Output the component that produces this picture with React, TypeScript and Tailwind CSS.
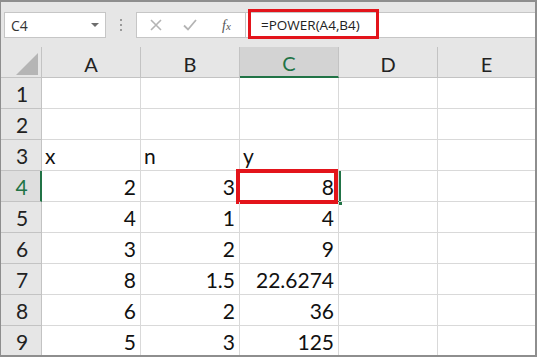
import React from "react";

const rows: { n: number; a?: string; b?: string; c?: string; left?: boolean }[] = [
  { n: 1 },
  { n: 2 },
  { n: 3, a: "x", b: "n", c: "y", left: true },
  { n: 4, a: "2", b: "3", c: "8" },
  { n: 5, a: "4", b: "1", c: "4" },
  { n: 6, a: "3", b: "2", c: "9" },
  { n: 7, a: "8", b: "1.5", c: "22.6274" },
  { n: 8, a: "6", b: "2", c: "36" },
  { n: 9, a: "5", b: "3", c: "125" },
];

const cellFont = { fontFamily: "Lato, 'Open Sans', sans-serif" };
const uiFont = { fontFamily: "'Open Sans', 'Noto Sans', sans-serif" };

function Cell({ v, left, w, extra }: { v?: string; left?: boolean; w: string; extra?: React.ReactNode }) {
  return (
    <div
      className={`relative h-full ${w} shrink-0 border-r border-b border-[#d9d9d9] flex items-center text-[21px] text-[#111] ${
        left ? "justify-start pl-[3px]" : "justify-end pr-[4px]"
      }`}
      style={cellFont}
    >
      <span className="leading-none pt-[1px]">{v ?? ""}</span>
      {extra}
    </div>
  );
}

export default function App() {
  return (
    <div className="w-[537px] h-[357px] overflow-hidden bg-white border-t-2 border-r-2 border-b-2 border-l border-[#8e8e8e] flex flex-col">
      {/* toolbar */}
      <div className="h-[45px] shrink-0 bg-[#e6e6e6] flex items-start pt-[10px] relative">
        <div className="ml-[3px] w-[102px] h-[26px] bg-white border border-[#c6c6c6] flex items-center justify-between pl-[6px] pr-[6px]">
          <span className="text-[14px] text-[#333]" style={uiFont}>C4</span>
          <svg width="8" height="4" viewBox="0 0 8 4"><path d="M0 0H8L4 4Z" fill="#6d6d6d" /></svg>
        </div>
        <div className="w-[30px] h-[26px] flex flex-col items-center justify-center gap-[3px]">
          <div className="w-[2px] h-[2px] bg-[#9a9a9a]" />
          <div className="w-[2px] h-[2px] bg-[#9a9a9a]" />
          <div className="w-[2px] h-[2px] bg-[#9a9a9a]" />
        </div>
        <div className="w-[110px] h-[26px] bg-white border border-[#c6c6c6] flex items-center">
          <svg className="ml-[12px]" width="14" height="14" viewBox="0 0 14 14">
            <path d="M2 2L12 12M12 2L2 12" stroke="#b4b4b4" strokeWidth="1.6" />
          </svg>
          <svg className="ml-[19px]" width="16" height="14" viewBox="0 0 16 14">
            <path d="M2 7.5L6 11.5L14 2" stroke="#b4b4b4" strokeWidth="1.8" fill="none" />
          </svg>
          <span
            className="ml-[24px] text-[14px] italic text-[#555]"
            style={{ fontFamily: "'Liberation Serif', serif" }}
          >
            f<span className="text-[11px]">x</span>
          </span>
        </div>
        <div className="flex-1 h-[26px] bg-white border-t border-b border-[#c6c6c6] flex items-center">
          <span className="ml-[15px] text-[13.5px] text-[#222]" style={uiFont}>=POWER(A4,B4)</span>
        </div>
        <div className="absolute left-[247px] top-[7px] w-[131px] h-[30px] border-[3px] border-[#e3141b]" />
      </div>

      {/* column header */}
      <div className="h-[31px] shrink-0 flex bg-[#e6e6e6]">
        <div className="relative w-[41px] h-full shrink-0 border-r border-b border-[#c3c3c3]">
          <svg className="absolute left-[15px] top-[6px]" width="22" height="22" viewBox="0 0 22 22">
            <path d="M22 0V22H0Z" fill="#b5b5b5" />
          </svg>
        </div>
        {["A", "B", "C", "D", "E"].map((l, i) => (
          <div
            key={l}
            className={`h-full shrink-0 flex items-center justify-center text-[20px] ${
              i === 4 ? "flex-1" : "w-[99px] border-r border-[#c3c3c3]"
            } ${
              l === "C"
                ? "bg-[#d3d3d3] border-b-2 border-b-[#217346] text-[#217346]"
                : "border-b border-b-[#c3c3c3] text-[#222]"
            }`}
            style={cellFont}
          >
            <span className="leading-none pt-[3px]">{l}</span>
          </div>
        ))}
      </div>

      {/* rows */}
      {rows.map((r) => (
        <div key={r.n} className="h-[31px] shrink-0 flex">
          <div
            className={`w-[41px] h-full shrink-0 border-b border-b-[#c3c3c3] flex items-center justify-center text-[21px] ${
              r.n === 4
                ? "border-r-2 border-r-[#217346] text-[#217346] bg-[#dedede]"
                : "border-r border-r-[#c3c3c3] text-[#222] bg-[#e6e6e6]"
            }`}
            style={cellFont}
          >
            <span className="leading-none pt-[1px] pl-[2px]">{r.n}</span>
          </div>
          <Cell v={r.a} left={r.left} w="w-[99px]" />
          <Cell v={r.b} left={r.left} w="w-[99px]" />
          <Cell
            v={r.c}
            left={r.left}
            w="w-[99px]"
            extra={
              r.n === 4 ? (
                <>
                  <div className="absolute left-[-4px] top-[-2px] right-[0px] bottom-[-3px] border-4 border-[#e3141b]" />
                  <div className="absolute right-[-3px] top-[0px] w-[2px] h-[31px] bg-[#217346]" />
                  <div className="absolute right-[-4px] bottom-[-4px] w-[4px] h-[4px] bg-[#217346]" />
                </>
              ) : null
            }
          />
          <Cell w="w-[99px]" />
          <div className="flex-1 h-full border-b border-[#d9d9d9]" />
        </div>
      ))}
    </div>
  );
}
